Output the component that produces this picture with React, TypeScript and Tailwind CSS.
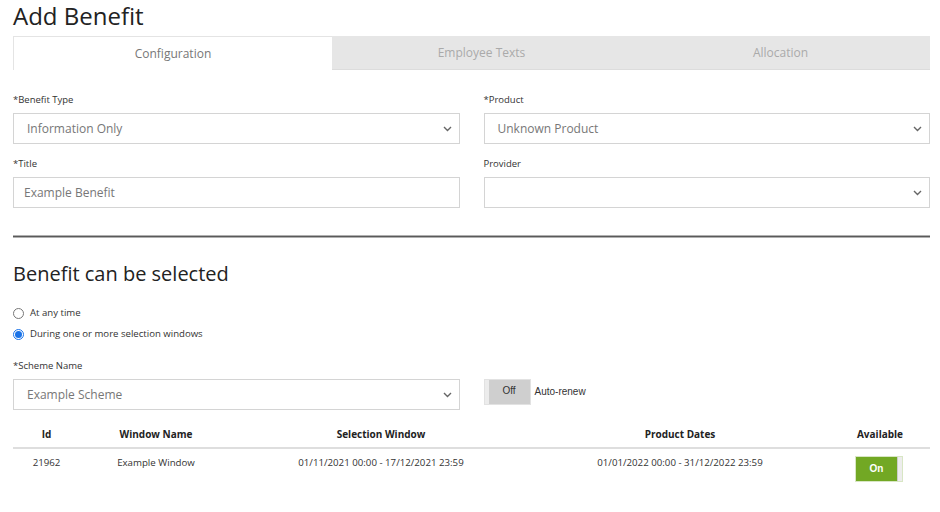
import React from "react";

const Chevron = () => (
  <svg width="9" height="6" viewBox="0 0 9 6" className="shrink-0">
    <path d="M1 1 L4.5 4.5 L8 1" fill="none" stroke="#666" strokeWidth="1.4" />
  </svg>
);

const Select = ({ value }: { value: string }) => (
  <div className="h-[31px] border border-[#d4d4d4] bg-white flex items-center justify-between pl-[13px] pr-[7px]">
    <span className="text-[12px] text-[#777]">{value}</span>
    <Chevron />
  </div>
);

const Label = ({ children }: { children: React.ReactNode }) => (
  <div className="text-[9.5px] text-[#333] leading-[12px] mb-[7px]">{children}</div>
);

export default function App() {
  return (
    <div className="w-[940px] h-[512px] bg-white overflow-hidden pl-[13px] pr-[10px]" style={{ fontFamily: '"Open Sans", sans-serif' }}>
      <h1 className="text-[24px] leading-[32px] text-[#222] font-normal">Add Benefit</h1>
      <div className="flex mt-[4px] h-[34px]">
        <div className="w-[319px] bg-white border-t border-l border-[#e4e4e4] flex items-center justify-center text-[12px] text-[#777]">Configuration</div>
        <div className="flex-1 bg-[#e6e6e6] border-b border-[#dcdcdc] flex items-center justify-center text-[12px] text-[#aaa]">Employee Texts</div>
        <div className="flex-1 bg-[#e6e6e6] border-b border-[#dcdcdc] flex items-center justify-center text-[12px] text-[#aaa]">Allocation</div>
      </div>

      <div className="grid grid-cols-2 gap-x-[24px] mt-[24px]">
        <div>
          <Label>*Benefit Type</Label>
          <Select value="Information Only" />
        </div>
        <div>
          <Label>*Product</Label>
          <Select value="Unknown Product" />
        </div>
        <div className="mt-[14px]">
          <Label>*Title</Label>
          <div className="h-[31px] border border-[#d4d4d4] bg-white flex items-center pl-[10px]">
            <span className="text-[12px] text-[#777]">Example Benefit</span>
          </div>
        </div>
        <div className="mt-[14px]">
          <Label>Provider</Label>
          <Select value="" />
        </div>
      </div>

      <div className="mt-[27px] h-[3px] bg-[#5a5a5a] border-y border-[#b0b0b0]" />

      <h2 className="text-[20px] leading-[26px] text-[#222] mt-[23px]">Benefit can be selected</h2>

      <div className="mt-[20px] flex flex-col gap-[9px]">
        <div className="flex items-center gap-[6px] h-[12px]">
          <span className="w-[11px] h-[11px] rounded-full border border-[#777] bg-white" />
          <span className="text-[9.6px] text-[#333]">At any time</span>
        </div>
        <div className="flex items-center gap-[6px] h-[12px]">
          <span className="w-[11px] h-[11px] rounded-full border border-[#1a73e8] bg-white flex items-center justify-center">
            <span className="w-[7px] h-[7px] rounded-full bg-[#1a73e8]" />
          </span>
          <span className="text-[9.6px] text-[#333]">During one or more selection windows</span>
        </div>
      </div>

      <div className="grid grid-cols-2 gap-x-[24px] mt-[20px]">
        <div>
          <Label>*Scheme Name</Label>
          <Select value="Example Scheme" />
        </div>
        <div className="pt-[19px] flex items-start gap-[4px]">
          <div className="flex h-[26px] w-[47px] border border-[#e2e2e2]">
            <div className="w-[4px] bg-[#ececec]" />
            <div className="flex-1 bg-[#cfcfcf] flex items-center justify-center text-[10px] text-[#333] pb-[4px]" style={{ fontFamily: '"Liberation Sans", Arial, sans-serif' }}>Off</div>
          </div>
          <span className="text-[10px] text-[#333] mt-[5px]" style={{ fontFamily: '"Liberation Sans", Arial, sans-serif' }}>Auto-renew</span>
        </div>
      </div>

      <div className="mt-[17px]">
        <div className="flex h-[22px] items-start text-[10px] font-bold text-[#222] border-b-2 border-[#dedede]">
          <div className="w-[67px] text-center">Id</div>
          <div className="w-[152px] text-center">Window Name</div>
          <div className="w-[298px] text-center">Selection Window</div>
          <div className="w-[300px] text-center">Product Dates</div>
          <div className="flex-1 text-center">Available</div>
        </div>
        <div className="flex items-start text-[9.7px] text-[#333] pt-[7px]">
          <div className="w-[67px] text-center">21962</div>
          <div className="w-[152px] text-center">Example Window</div>
          <div className="w-[298px] text-center">01/11/2021 00:00 - 17/12/2021 23:59</div>
          <div className="w-[300px] text-center">01/01/2022 00:00 - 31/12/2022 23:59</div>
          <div className="flex-1 flex justify-center">
            <div className="flex h-[26px] w-[48px] border border-[#d8e6c4] -ml-[2px]">
              <div className="flex-1 bg-[#72a824] flex items-center justify-center text-[10px] font-bold text-white pb-[2px]" style={{ fontFamily: '"Liberation Sans", Arial, sans-serif' }}>On</div>
              <div className="w-[5px] bg-[#ededed] border-l border-[#ccc]" />
            </div>
          </div>
        </div>
      </div>
    </div>
  );
}
